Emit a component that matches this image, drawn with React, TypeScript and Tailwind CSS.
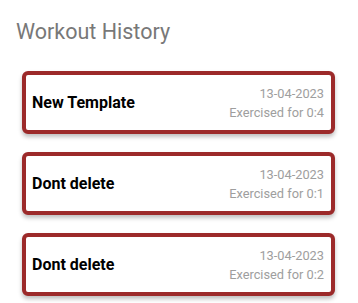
import React from 'react';

const workouts = [
  { name: 'New Template', date: '13-04-2023', duration: '0:4' },
  { name: 'Dont delete', date: '13-04-2023', duration: '0:1' },
  { name: 'Dont delete', date: '13-04-2023', duration: '0:2' },
];

export default function App() {
  return (
    <div className="w-[358px] h-[303px] bg-white overflow-hidden font-['Roboto',sans-serif]">
      <h2 className="pl-4 pt-[18px] text-[21.5px] leading-[27px] text-[#787878]">Workout History</h2>

      <div className="mt-[26px] ml-[22px] w-[313px] flex flex-col gap-[18px]">
        {workouts.map((w, i) => (
          <div
            key={i}
            className="h-[63px] flex items-center justify-between border-4 border-[#9c2a2a] rounded-[6px] bg-white pl-[6px] pr-[7px] shadow-[0_3px_4px_rgba(0,0,0,0.25)]"
          >
            <span className="text-[16px] font-bold text-black">{w.name}</span>
            <div className="flex flex-col items-end text-[12.8px] leading-[19px] text-[#9e9e9e]">
              <span>{w.date}</span>
              <span>Exercised for {w.duration}</span>
            </div>
          </div>
        ))}
      </div>
    </div>
  );
}
